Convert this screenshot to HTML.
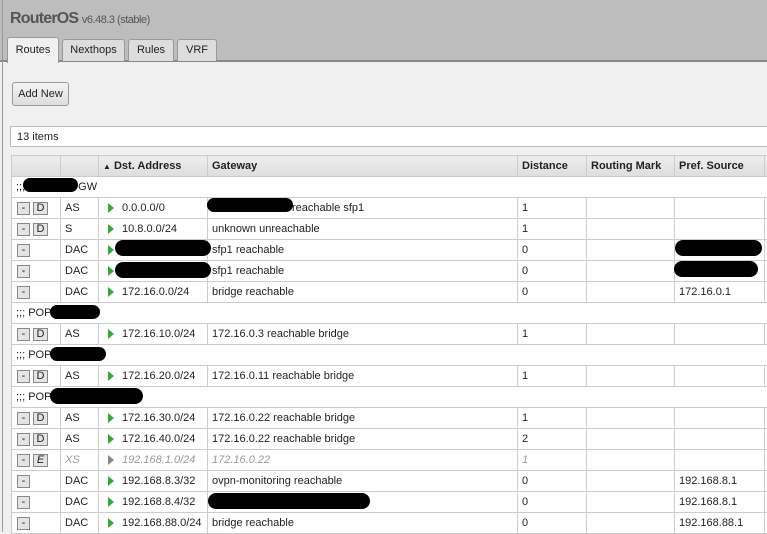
<!DOCTYPE html>
<html><head><meta charset="utf-8"><style>
*{margin:0;padding:0;box-sizing:border-box}
body{width:767px;height:532px;overflow:hidden;background:#f0f0f0;font-family:"Liberation Sans",sans-serif;font-size:11px;color:#222;position:relative}
#hdr{position:absolute;left:0;top:0;width:767px;height:62px;background:#bdbdbd;border-bottom:2px solid #888}
#lb{position:absolute;left:2px;top:0;width:1px;height:532px;background:#999}
.title{position:absolute;left:10px;top:10px;font-size:16px;font-weight:bold;color:#555;letter-spacing:-0.8px}
.title span{font-size:11px;font-weight:normal;letter-spacing:-0.5px}
.tab{position:absolute;top:39px;height:22px;border:1px solid #999;border-bottom:none;background:#ddd;border-radius:3px 3px 0 0;font-size:11px;text-align:center;line-height:21px;color:#222}
.tab.act{top:37px;height:26px;background:#f0f0f0;line-height:25px}
.btn{position:absolute;left:12px;top:82px;width:57px;height:24px;border:1px solid #999;border-radius:3px;background:linear-gradient(#f4f4f4,#ddd);line-height:23px;text-align:center}
.items{position:absolute;left:10px;top:126px;width:760px;height:21px;background:#fff;border:1px solid #bbb;line-height:20px;padding-left:6px}
table{position:absolute;left:11px;top:155px;border-collapse:collapse;table-layout:fixed;width:760px}
td,th{border:1px solid #ccc;height:21px;padding:0 4px;white-space:nowrap;overflow:hidden;text-align:left}
th{background:linear-gradient(#eee,#ddd);font-weight:bold}
tr{background:#fff}
.sb{display:inline-block;width:13px;height:13px;border:1px solid #888;background:#e4e4e4;font-size:11px;line-height:11px;text-align:center;vertical-align:middle;margin-right:2px;margin-left:1px}
.sb.w{width:15px}
.tri{display:inline-block;width:0;height:0;border-left:6px solid #3a3;border-top:5px solid transparent;border-bottom:5px solid transparent;vertical-align:middle;margin:0 8px 0 5px}
.dis td{color:#999;font-style:italic}
.dis .tri{border-left-color:#888}
.bl{position:absolute;background:#000;border-radius:9px}
</style></head><body>
<div id="hdr"></div><div id="lb"></div>
<div class="title">RouterOS <span>v6.48.3 (stable)</span></div>
<div class="tab act" style="left:7px;width:52px">Routes</div>
<div class="tab" style="left:62px;width:63px">Nexthops</div>
<div class="tab" style="left:128px;width:46px">Rules</div>
<div class="tab" style="left:177px;width:40px">VRF</div>
<div class="btn">Add New</div>
<div class="items">13 items</div>
<table>
<colgroup><col style="width:49px"><col style="width:38px"><col style="width:109px"><col style="width:310px"><col style="width:69px"><col style="width:88px"><col style="width:90px"><col></colgroup>
<tr><th></th><th></th><th><span style="font-size:8px">▲</span> Dst. Address</th><th>Gateway</th><th>Distance</th><th>Routing Mark</th><th>Pref. Source</th><th></th></tr>
<tr><td colspan="8">;;;<span style="padding-left:53px">GW</span></td></tr>
<tr><td><span class="sb">-</span><span class="sb w">D</span></td><td>AS</td><td><span class="tri"></span>0.0.0.0/0</td><td><span style="padding-left:80px">reachable sfp1</span></td><td>1</td><td></td><td></td><td></td></tr>
<tr><td><span class="sb">-</span><span class="sb w">D</span></td><td>S</td><td><span class="tri"></span>10.8.0.0/24</td><td>unknown unreachable</td><td>1</td><td></td><td></td><td></td></tr>
<tr><td><span class="sb">-</span></td><td>DAC</td><td><span class="tri"></span></td><td>sfp1 reachable</td><td>0</td><td></td><td></td><td></td></tr>
<tr><td><span class="sb">-</span></td><td>DAC</td><td><span class="tri"></span></td><td>sfp1 reachable</td><td>0</td><td></td><td></td><td></td></tr>
<tr><td><span class="sb">-</span></td><td>DAC</td><td><span class="tri"></span>172.16.0.0/24</td><td>bridge reachable</td><td>0</td><td></td><td>172.16.0.1</td><td></td></tr>
<tr><td colspan="8">;;; POP</td></tr>
<tr><td><span class="sb">-</span><span class="sb w">D</span></td><td>AS</td><td><span class="tri"></span>172.16.10.0/24</td><td>172.16.0.3 reachable bridge</td><td>1</td><td></td><td></td><td></td></tr>
<tr><td colspan="8">;;; POP</td></tr>
<tr><td><span class="sb">-</span><span class="sb w">D</span></td><td>AS</td><td><span class="tri"></span>172.16.20.0/24</td><td>172.16.0.11 reachable bridge</td><td>1</td><td></td><td></td><td></td></tr>
<tr><td colspan="8">;;; POP</td></tr>
<tr><td><span class="sb">-</span><span class="sb w">D</span></td><td>AS</td><td><span class="tri"></span>172.16.30.0/24</td><td>172.16.0.22 reachable bridge</td><td>1</td><td></td><td></td><td></td></tr>
<tr><td><span class="sb">-</span><span class="sb w">D</span></td><td>AS</td><td><span class="tri"></span>172.16.40.0/24</td><td>172.16.0.22 reachable bridge</td><td>2</td><td></td><td></td><td></td></tr>
<tr class="dis"><td style="font-style:normal;color:#222"><span class="sb">-</span><span class="sb w" style="font-style:italic">E</span></td><td>XS</td><td><span class="tri"></span>192.168.1.0/24</td><td>172.16.0.22</td><td>1</td><td></td><td></td><td></td></tr>
<tr><td><span class="sb">-</span></td><td>DAC</td><td><span class="tri"></span>192.168.8.3/32</td><td>ovpn-monitoring reachable</td><td>0</td><td></td><td>192.168.8.1</td><td></td></tr>
<tr><td><span class="sb">-</span></td><td>DAC</td><td><span class="tri"></span>192.168.8.4/32</td><td></td><td>0</td><td></td><td>192.168.8.1</td><td></td></tr>
<tr><td><span class="sb">-</span></td><td>DAC</td><td><span class="tri"></span>192.168.88.0/24</td><td>bridge reachable</td><td>0</td><td></td><td>192.168.88.1</td><td></td></tr>
</table>
<div class="bl" style="left:23px;top:178px;width:55px;height:14px"></div>
<div class="bl" style="left:207px;top:198px;width:86px;height:14px"></div>
<div class="bl" style="left:115px;top:240px;width:96px;height:16px"></div>
<div class="bl" style="left:675px;top:240px;width:87px;height:16px"></div>
<div class="bl" style="left:115px;top:262px;width:96px;height:16px"></div>
<div class="bl" style="left:674px;top:261px;width:84px;height:16px"></div>
<div class="bl" style="left:50px;top:305px;width:50px;height:14px"></div>
<div class="bl" style="left:50px;top:347px;width:56px;height:14px"></div>
<div class="bl" style="left:50px;top:388px;width:93px;height:16px"></div>
<div class="bl" style="left:208px;top:493px;width:162px;height:16px"></div>
</body></html>
